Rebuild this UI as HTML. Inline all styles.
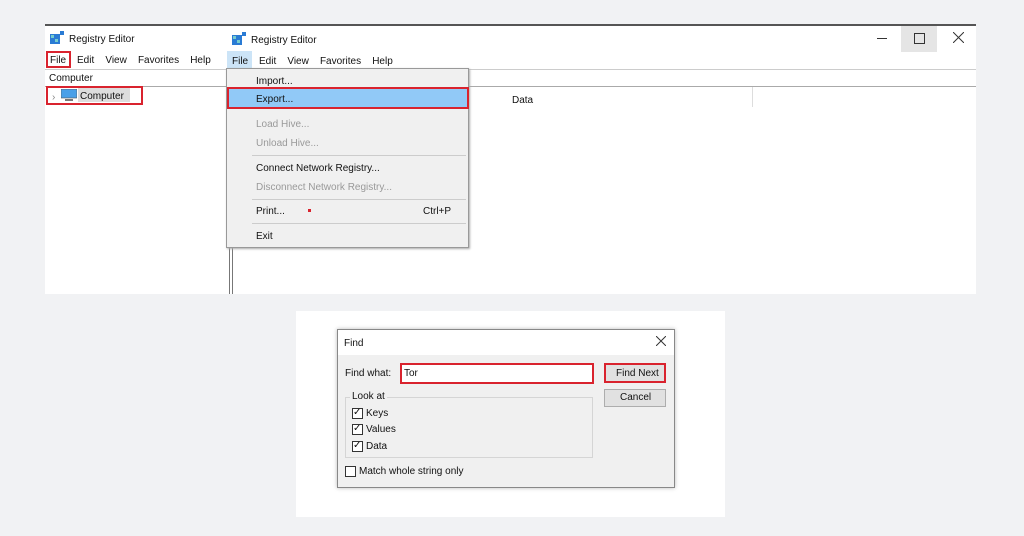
<!DOCTYPE html><html><head><style>
body{margin:0;width:1024px;height:536px;background:#f1f2f4;font-family:"Liberation Sans",sans-serif;font-size:10px;color:#111;position:relative;overflow:hidden}
.a{position:absolute}
.t{position:absolute;white-space:nowrap;line-height:12px;margin-top:2px}
.g{color:#999}
.red{position:absolute;border:2px solid #d9232e;box-sizing:border-box}
.cb{position:absolute;width:11px;height:11px;border:1px solid #333;box-sizing:border-box;background:#fff}
</style></head><body>
<div class="a" style="left:45px;top:24px;width:931px;height:270px;background:#fff;border-top:2px solid #555;box-sizing:border-box"></div>
<svg class="a" style="left:50px;top:31px" width="14" height="14"><rect x="0" y="3" width="10" height="10" fill="#2a7bd4"/><rect x="1" y="4" width="3" height="3" fill="#7cc"/><rect x="5" y="8" width="3" height="3" fill="#7cc"/><rect x="10" y="0" width="4" height="4" fill="#2a7bd4"/></svg>
<div class="t" style="left:69px;top:32px">Registry Editor</div>
<div class="t" style="left:50px;top:53px">File</div><div class="red" style="left:46px;top:51px;width:25px;height:17px"></div>
<div class="t" style="left:77px;top:53px">Edit&nbsp;&nbsp;&nbsp; View&nbsp;&nbsp;&nbsp; Favorites&nbsp;&nbsp;&nbsp; Help</div>
<div class="a" style="left:45px;top:69px;width:931px;height:1px;background:#ccc"></div>
<div class="t" style="left:49px;top:71px">Computer</div>
<div class="a" style="left:45px;top:86px;width:931px;height:1px;background:#aaa"></div>
<div class="t" style="left:52px;top:90px;color:#888">›</div>
<svg class="a" style="left:61px;top:89px" width="16" height="12"><rect x="0" y="0" width="16" height="9" fill="#4aa0e8" stroke="#555" stroke-width=".6"/><rect x="4" y="10" width="8" height="2" fill="#777"/></svg>
<div class="a" style="left:78px;top:88px;width:52px;height:14px;background:#ddd"></div>
<div class="t" style="left:80px;top:89px">Computer</div>
<div class="red" style="left:46px;top:86px;width:97px;height:19px"></div>
<div class="a" style="left:229px;top:248px;width:1px;height:46px;background:#777"></div>
<div class="a" style="left:232px;top:248px;width:1px;height:46px;background:#777"></div>
<svg class="a" style="left:232px;top:32px" width="14" height="14"><rect x="0" y="3" width="10" height="10" fill="#2a7bd4"/><rect x="1" y="4" width="3" height="3" fill="#7cc"/><rect x="5" y="8" width="3" height="3" fill="#7cc"/><rect x="10" y="0" width="4" height="4" fill="#2a7bd4"/></svg>
<div class="t" style="left:251px;top:33px">Registry Editor</div>
<div class="a" style="left:227px;top:51px;width:25px;height:17px;background:#cce4f7"></div>
<div class="t" style="left:232px;top:54px">File</div>
<div class="t" style="left:259px;top:54px">Edit&nbsp;&nbsp;&nbsp; View&nbsp;&nbsp;&nbsp; Favorites&nbsp;&nbsp;&nbsp; Help</div>
<div class="a" style="left:901px;top:26px;width:36px;height:26px;background:#e5e5e5"></div>
<div class="a" style="left:877px;top:38px;width:10px;height:1px;background:#333"></div>
<div class="a" style="left:914px;top:33px;width:9px;height:9px;border:1px solid #333"></div>
<svg class="a" style="left:953px;top:32px" width="11" height="11"><path d="M0 0L11 11M11 0L0 11" stroke="#333"/></svg>
<div class="t" style="left:512px;top:93px">Data</div>
<div class="a" style="left:752px;top:87px;width:1px;height:20px;background:#ddd"></div>
<div class="a" style="left:226px;top:68px;width:243px;height:180px;background:#f0f0f0;border:1px solid #999;box-sizing:border-box;box-shadow:1px 1px 2px #aaa"></div>
<div class="t" style="left:256px;top:74px">Import...</div>
<div class="a" style="left:227px;top:87px;width:242px;height:22px;background:#91c9f7"></div>
<div class="red" style="left:227px;top:87px;width:242px;height:22px"></div>
<div class="t" style="left:256px;top:92px">Export...</div>
<div class="t g" style="left:256px;top:117px">Load Hive...</div>
<div class="t g" style="left:256px;top:136px">Unload Hive...</div>
<div class="a" style="left:252px;top:155px;width:214px;height:1px;background:#ccc"></div>
<div class="t" style="left:256px;top:161px">Connect Network Registry...</div>
<div class="t g" style="left:256px;top:180px">Disconnect Network Registry...</div>
<div class="a" style="left:252px;top:199px;width:214px;height:1px;background:#ccc"></div>
<div class="t" style="left:256px;top:204px">Print...</div>
<div class="a" style="left:308px;top:209px;width:3px;height:3px;background:#d9232e"></div>
<div class="t" style="left:423px;top:204px">Ctrl+P</div>
<div class="a" style="left:252px;top:223px;width:214px;height:1px;background:#ccc"></div>
<div class="t" style="left:256px;top:229px">Exit</div>
<div class="a" style="left:296px;top:311px;width:429px;height:206px;background:#fff"></div>
<div class="a" style="left:337px;top:329px;width:338px;height:159px;background:#f0f0f0;border:1px solid #888;box-sizing:border-box;box-shadow:0 0 4px #bbb"></div>
<div class="a" style="left:338px;top:330px;width:336px;height:25px;background:#fff"></div>
<div class="t" style="left:344px;top:336px">Find</div>
<svg class="a" style="left:656px;top:336px" width="10" height="10"><path d="M0 0L10 10M10 0L0 10" stroke="#333"/></svg>
<div class="t" style="left:345px;top:366px">Find what:</div>
<div class="a" style="left:400px;top:363px;width:194px;height:21px;background:#fff"></div>
<div class="red" style="left:400px;top:363px;width:194px;height:21px"></div>
<div class="t" style="left:404px;top:366px">Tor</div>
<div class="a" style="left:604px;top:363px;width:62px;height:20px;background:#e1e1e1"></div>
<div class="red" style="left:604px;top:363px;width:62px;height:20px"></div>
<div class="t" style="left:616px;top:366px">Find Next</div>
<div class="a" style="left:604px;top:389px;width:62px;height:18px;background:#e1e1e1;border:1px solid #adadad;box-sizing:border-box"></div>
<div class="t" style="left:620px;top:390px">Cancel</div>
<div class="a" style="left:345px;top:397px;width:248px;height:61px;border:1px solid #d5d5d5;box-sizing:border-box"></div>
<div class="t" style="left:350px;top:389px;background:#f0f0f0;padding:0 2px">Look at</div>
<div class="cb" style="left:352px;top:408px"></div><div class="t" style="left:353px;top:405px">✓</div><div class="t" style="left:366px;top:406px">Keys</div>
<div class="cb" style="left:352px;top:424px"></div><div class="t" style="left:353px;top:421px">✓</div><div class="t" style="left:366px;top:422px">Values</div>
<div class="cb" style="left:352px;top:441px"></div><div class="t" style="left:353px;top:438px">✓</div><div class="t" style="left:366px;top:439px">Data</div>
<div class="cb" style="left:345px;top:466px"></div><div class="t" style="left:359px;top:464px">Match whole string only</div>
</body></html>
